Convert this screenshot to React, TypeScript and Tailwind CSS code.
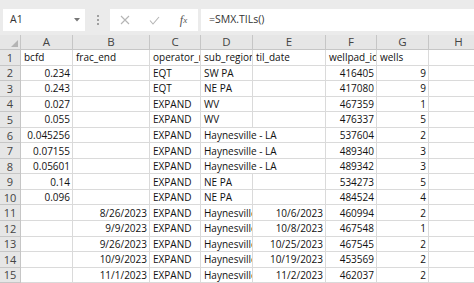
import React from "react";

type Cell = { t?: string; a?: "l" | "r"; ov?: boolean };

const L = (t: string): Cell => ({ t, a: "l" });
const R = (t: string): Cell => ({ t, a: "r" });
const E: Cell = {};
const OV = (t: string): Cell => ({ t, a: "l", ov: true });

const rows: Cell[][] = [
  [L("bcfd"), L("frac_end"), L("operator_name"), L("sub_region"), L("til_date"), L("wellpad_id"), L("wells"), E],
  [R("0.234"), E, L("EQT"), L("SW PA"), E, R("416405"), R("9"), E],
  [R("0.243"), E, L("EQT"), L("NE PA"), E, R("417080"), R("9"), E],
  [R("0.027"), E, L("EXPAND"), L("WV"), E, R("467359"), R("1"), E],
  [R("0.055"), E, L("EXPAND"), L("WV"), E, R("476337"), R("5"), E],
  [R("0.045256"), E, L("EXPAND"), OV("Haynesville - LA"), E, R("537604"), R("2"), E],
  [R("0.07155"), E, L("EXPAND"), OV("Haynesville - LA"), E, R("489340"), R("3"), E],
  [R("0.05601"), E, L("EXPAND"), OV("Haynesville - LA"), E, R("489342"), R("3"), E],
  [R("0.14"), E, L("EXPAND"), L("NE PA"), E, R("534273"), R("5"), E],
  [R("0.096"), E, L("EXPAND"), L("NE PA"), E, R("484524"), R("4"), E],
  [E, R("8/26/2023"), L("EXPAND"), L("Haynesville - LA"), R("10/6/2023"), R("460994"), R("2"), E],
  [E, R("9/9/2023"), L("EXPAND"), L("Haynesville - LA"), R("10/8/2023"), R("467548"), R("1"), E],
  [E, R("9/26/2023"), L("EXPAND"), L("Haynesville - LA"), R("10/25/2023"), R("467545"), R("2"), E],
  [E, R("10/9/2023"), L("EXPAND"), L("Haynesville - LA"), R("10/19/2023"), R("453569"), R("2"), E],
  [E, R("11/1/2023"), L("EXPAND"), L("Haynesville - LA"), R("11/2/2023"), R("462037"), R("2"), E],
];

const cols = ["A", "B", "C", "D", "E", "F", "G", "H"];

export default function App() {
  return (
    <div
      className="w-[474px] h-[283px] overflow-hidden bg-white text-[#111]"
      style={{ fontFamily: '"Open Sans", "Liberation Sans", sans-serif' }}
    >
      {/* formula bar */}
      <div className="h-[35px] bg-[#ebebeb] flex items-start pt-[9px]">
        <div className="ml-[3px] w-[82px] h-[22px] bg-white flex items-center pl-[7px] pr-[5px] text-[10.5px] text-[#333]">
          <span className="flex-1">A1</span>
          <svg width="6" height="4" viewBox="0 0 6 4">
            <path d="M0 0 L6 0 L3 3.5 Z" fill="#777" />
          </svg>
        </div>
        <div className="w-[25px] h-[22px] flex items-center justify-center">
          <div className="flex flex-col gap-[2px]">
            <div className="w-[2px] h-[2px] bg-[#a0a0a0]" />
            <div className="w-[2px] h-[2px] bg-[#a0a0a0]" />
            <div className="w-[2px] h-[2px] bg-[#a0a0a0]" />
          </div>
        </div>
        <div className="w-[88px] h-[22px] bg-white flex items-center">
          <div className="w-[28px] flex justify-center ml-[1px]">
            <svg width="10" height="10" viewBox="0 0 10 10">
              <path d="M1 1 L9 9 M9 1 L1 9" stroke="#b5b5b5" strokeWidth="1.1" />
            </svg>
          </div>
          <div className="w-[30px] flex justify-center">
            <svg width="11" height="9" viewBox="0 0 11 9">
              <path d="M1 4.5 L4 8 L10 1" stroke="#b5b5b5" strokeWidth="1.1" fill="none" />
            </svg>
          </div>
          <div
            className="w-[29px] flex justify-center text-[#555] italic text-[12px] leading-none"
            style={{ fontFamily: '"Liberation Serif", serif' }}
          >
            f<span className="text-[9px] relative top-[2px]">x</span>
          </div>
        </div>
        <div className="ml-[3px] flex-1 h-[22px] bg-white flex items-center pl-[8px] text-[10.5px] text-[#333]">
          =SMX.TILs()
        </div>
      </div>

      {/* grid */}
      <div className="grid grid-cols-[21px_52px_77px_51px_52px_73px_51px_52px_60px]">
        {/* header row */}
        <div className="h-[15px] bg-[#e6e6e6] border-r border-b border-[#c6c6c6] relative">
          <svg className="absolute right-[2px] bottom-[2px]" width="7" height="7" viewBox="0 0 7 7">
            <path d="M7 0 L7 7 L0 7 Z" fill="#b4b4b4" />
          </svg>
        </div>
        {cols.map((c) => (
          <div
            key={c}
            className="h-[15px] bg-[#e6e6e6] border-r border-b border-[#c6c6c6] flex items-center justify-center text-[11.5px] text-[#444] leading-none"
          >
            {c}
          </div>
        ))}

        {rows.map((r, i) => (
          <React.Fragment key={i}>
            <div className="h-[15.55px] bg-[#e6e6e6] border-r border-b border-[#c6c6c6] flex items-center justify-center text-[11px] text-[#444] leading-none">
              {i + 1}
            </div>
            {r.map((cell, j) => (
              <div
                key={j}
                className={`h-[15.55px] border-b border-[#dadada] flex items-center whitespace-nowrap text-[10px] leading-none ${
                  cell.ov ? "overflow-visible relative z-10" : "border-r overflow-hidden"
                } ${cell.a === "r" ? "justify-end pr-[2px]" : "justify-start pl-[3px]"}`}
              >
                {cell.t}
              </div>
            ))}
          </React.Fragment>
        ))}
      </div>
    </div>
  );
}
